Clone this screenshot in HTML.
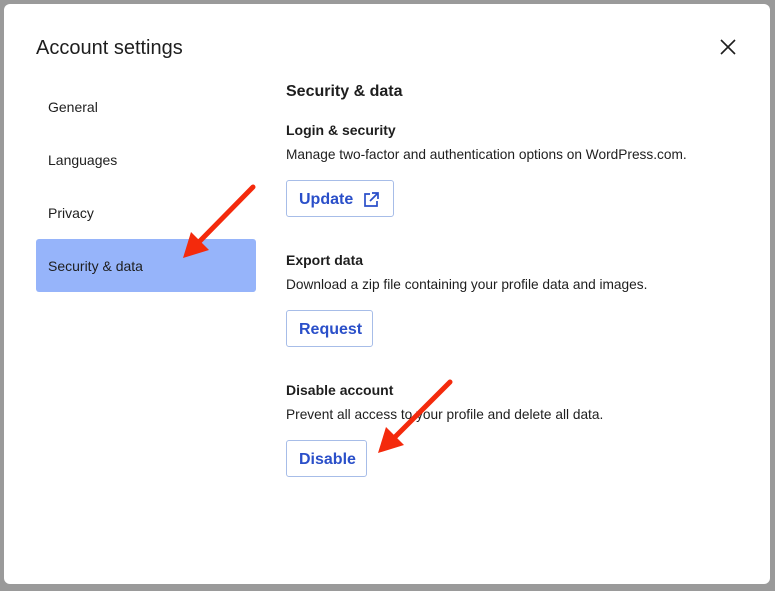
<!DOCTYPE html>
<html><head><style>
body{margin:0;width:775px;height:591px;background:#9a9a9a;position:relative;overflow:hidden;font-family:"Liberation Sans",Arial,sans-serif;color:#1e1e1e}
.m{position:absolute;left:4px;top:4px;width:766px;height:580px;background:#fff;border-radius:6px}
.a{position:absolute;white-space:nowrap}
.nav{font-size:14px;left:48px}
.sel{position:absolute;left:36px;top:239px;width:220px;height:53px;background:#96b4fa;border-radius:3px}
.h{font-size:14px;font-weight:bold;left:286px}
.p{font-size:13.7px;left:286px}
.b{position:absolute;left:286px;height:37px;border:1px solid #a7bde8;border-radius:3px;box-sizing:border-box;color:#2a4fc9;font-size:16px;font-weight:bold;display:flex;align-items:center;padding:2px 12px 0}
</style></head><body>
<div class="m"></div>
<div class="a" style="left:36px;top:37px;font-size:20px">Account settings</div>
<svg class="a" style="left:719px;top:38px" width="18" height="18"><path d="M2 2L16 16M16 2L2 16" stroke="#1e1e1e" stroke-width="1.6"/></svg>
<div class="sel"></div>
<div class="a nav" style="top:99px">General</div>
<div class="a nav" style="top:152px">Languages</div>
<div class="a nav" style="top:205px">Privacy</div>
<div class="a nav" style="top:258px">Security &amp; data</div>
<div class="a" style="left:286px;top:83px;font-size:16px;font-weight:bold">Security &amp; data</div>
<div class="a h" style="top:122px">Login &amp; security</div>
<div class="a p" style="top:147px">Manage two-factor and authentication options on WordPress.com.</div>
<div class="b" style="top:180px;width:108px">Update<svg style="margin-left:10px" width="16" height="16" viewBox="0 0 16 16"><path d="M7 2H2v12h12V9M9 1h6v6M15 1L7 9" stroke="#2a4fc9" stroke-width="1.7" fill="none"/></svg></div>
<div class="a h" style="top:252px">Export data</div>
<div class="a p" style="top:277px">Download a zip file containing your profile data and images.</div>
<div class="b" style="top:310px;width:87px">Request</div>
<div class="a h" style="top:382px">Disable account</div>
<div class="a p" style="top:407px">Prevent all access to your profile and delete all data.</div>
<div class="b" style="top:440px;width:81px">Disable</div>
<svg class="a" style="left:0;top:0" width="775" height="591">
<path d="M253 187L198 243" stroke="#f42a0c" stroke-width="5" stroke-linecap="round"/>
<polygon points="183,258 191,232 209,250" fill="#f42a0c"/>
<path d="M450 382L394 438" stroke="#f42a0c" stroke-width="5" stroke-linecap="round"/>
<polygon points="378,453 386,427 404,445" fill="#f42a0c"/>
</svg>
</body></html>
